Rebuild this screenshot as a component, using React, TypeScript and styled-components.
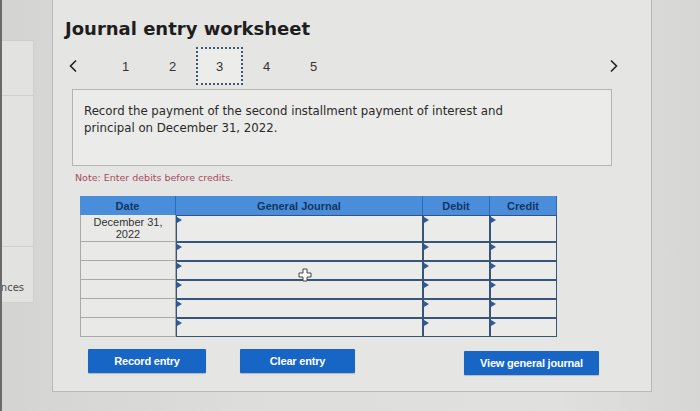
import React from "react";
import styled, { createGlobalStyle } from "styled-components";

const GlobalStyle = createGlobalStyle`
  html, body {
    margin: 0;
    padding: 0;
    width: 700px;
    height: 411px;
    overflow: hidden;
    background: #d9d9d7;
  }
  * {
    box-sizing: border-box;
  }
`;

const Page = styled.div`
  position: relative;
  width: 700px;
  height: 411px;
  background: linear-gradient(to right, #d4d4d2, #dededc 40%, #e0e0de 80%, #d6d6d4);
  border-left: 2px solid #6a6a6a;
  font-family: "DejaVu Sans", Verdana, sans-serif;
  overflow: hidden;
`;

const SideMenu = styled.div`
  display: flex;
  flex-direction: column;
  width: 32px;
  margin-top: 40px;
  height: 263px;
  background: #e2e2e0;
  border: 1px solid #cfcfcd;
  border-left: none;
`;

const SideItem = styled.div<{ $grow?: boolean }>`
  flex: ${(p) => (p.$grow ? 1 : "none")};
  height: ${(p) => (p.$grow ? "auto" : "55px")};
  border-bottom: 1px solid #d0d0ce;
  display: flex;
  align-items: flex-end;
  justify-content: flex-end;
  padding: 0 9px 9px 0;
  font-size: 10px;
  color: #4a4a4a;
  overflow: hidden;
  white-space: nowrap;
  &:last-child {
    border-bottom: none;
  }
`;

const Modal = styled.div`
  position: absolute;
  left: 50px;
  top: -10px;
  width: 600px;
  height: 402px;
  background: #e5e5e3;
  border: 1px solid #b9b9b7;
  display: flex;
  flex-direction: column;
`;

const Title = styled.h1`
  margin: 26px 0 0 12px;
  font-family: "DejaVu Sans", Verdana, sans-serif;
  font-weight: bold;
  font-size: 18px;
  line-height: 24px;
  color: #1e1e1e;
`;

const Pager = styled.div`
  display: flex;
  align-items: center;
  height: 38px;
  margin-top: 6px;
  padding-left: 15px;
  padding-right: 32px;
  font-family: "Liberation Sans", Arial, sans-serif;
`;

const Chevron = styled.div<{ $wide?: boolean }>`
  width: ${(p) => (p.$wide ? "34px" : "auto")};
  display: flex;
  align-items: center;
`;

const PageItem = styled.div<{ $active?: boolean }>`
  width: 47px;
  height: 38px;
  display: flex;
  align-items: center;
  justify-content: center;
  font-size: 13px;
  color: #333;
  border: ${(p) => (p.$active ? "2px dotted #3d5675" : "none")};
  background: ${(p) => (p.$active ? "#ececea" : "transparent")};
`;

const Spacer = styled.div`
  flex: 1;
`;

const Prompt = styled.div`
  margin: 4px 0 0 19px;
  width: 540px;
  height: 77px;
  border: 1px solid #b5b5b3;
  background: #ebebe9;
  padding: 13px 11px;
  font-size: 11.75px;
  line-height: 17px;
  color: #2a2a2a;
`;

const Note = styled.div`
  margin: 6px 0 0 22px;
  font-size: 9.5px;
  color: #a84a5c;
`;

const Journal = styled.div`
  position: relative;
  margin: 13px 0 0 27px;
  width: 477px;
  display: grid;
  grid-template-columns: 96px 247px 67px 67px;
  grid-template-rows: 19px 27px repeat(5, 19px);
  font-family: "Liberation Sans", Arial, sans-serif;
`;

const HeadCell = styled.div`
  background: #4a8edb;
  color: #15355f;
  font-weight: bold;
  font-size: 11px;
  display: flex;
  align-items: center;
  justify-content: center;
  border-right: 1px solid #2f6bb0;
  &:last-of-type {
    border-right: none;
  }
`;

const DateCell = styled.div`
  background: #e9e9e7;
  border: 1px solid #a9a9a7;
  border-top: none;
  font-size: 11px;
  line-height: 12px;
  color: #333;
  text-align: center;
  padding-top: 1px;
`;

const EntryCell = styled.div`
  position: relative;
  background: #ebebe9;
  border: 1.5px solid #37557c;
  border-top-width: 1px;
  &::before {
    content: "";
    position: absolute;
    left: 0;
    top: 1px;
    border-top: 3px solid transparent;
    border-bottom: 3px solid transparent;
    border-left: 5px solid #2c5aa0;
  }
`;

const Cursor = styled.svg`
  position: absolute;
  left: 218px;
  top: 72px;
`;

const Actions = styled.div`
  display: flex;
  align-items: flex-start;
  margin: 12px 0 0 35px;
  padding-right: 52px;
`;

const ActionButton = styled.button<{ $width: number; $gap?: number; $offset?: number }>`
  width: ${(p) => p.$width}px;
  height: 24px;
  margin-left: ${(p) => p.$gap ?? 0}px;
  margin-top: ${(p) => p.$offset ?? 0}px;
  padding: 0;
  border: none;
  border-radius: 1px;
  background: #1765c4;
  color: #fff;
  font-family: "Liberation Sans", Arial, sans-serif;
  font-weight: bold;
  font-size: 11px;
  letter-spacing: -0.2px;
  box-shadow: 0 1px 1px rgba(0, 0, 0, 0.2);
`;

const pages = [1, 2, 3, 4, 5];
const rowCount = 6;

const ChevronIcon = ({ dir }: { dir: "left" | "right" }) => (
  <svg width="10" height="14" viewBox="0 0 10 14">
    <path
      d={dir === "left" ? "M8 1.5 L2.5 7 L8 12.5" : "M2 1.5 L7.5 7 L2 12.5"}
      fill="none"
      stroke="#222"
      strokeWidth="1.6"
    />
  </svg>
);

export default function App() {
  return (
    <Page>
      <GlobalStyle />
      <SideMenu>
        <SideItem>&nbsp;</SideItem>
        <SideItem $grow>&nbsp;</SideItem>
        <SideItem>nces</SideItem>
      </SideMenu>

      <Modal>
        <Title>Journal entry worksheet</Title>

        <Pager>
          <Chevron $wide>
            <ChevronIcon dir="left" />
          </Chevron>
          {pages.map((n) => (
            <PageItem key={n} $active={n === 3}>
              {n}
            </PageItem>
          ))}
          <Spacer />
          <Chevron>
            <ChevronIcon dir="right" />
          </Chevron>
        </Pager>

        <Prompt>
          Record the payment of the second installment payment of interest and
          <br />
          principal on December 31, 2022.
        </Prompt>

        <Note>Note: Enter debits before credits.</Note>

        <Journal>
          <HeadCell>Date</HeadCell>
          <HeadCell>General Journal</HeadCell>
          <HeadCell>Debit</HeadCell>
          <HeadCell>Credit</HeadCell>
          {Array.from({ length: rowCount }).map((_, i) => (
            <React.Fragment key={i}>
              <DateCell>
                {i === 0 ? (
                  <>
                    December 31,
                    <br />
                    2022
                  </>
                ) : null}
              </DateCell>
              <EntryCell />
              <EntryCell />
              <EntryCell />
            </React.Fragment>
          ))}
          <Cursor width="14" height="14" viewBox="0 0 14 14">
            <path
              d="M5 1 H9 V5 H13 V9 H9 V13 H5 V9 H1 V5 H5 Z"
              fill="#fff"
              stroke="#444"
              strokeWidth="1"
            />
          </Cursor>
        </Journal>

        <Actions>
          <ActionButton $width={118}>Record entry</ActionButton>
          <ActionButton $width={115} $gap={34}>
            Clear entry
          </ActionButton>
          <Spacer />
          <ActionButton $width={135} $offset={2}>
            View general journal
          </ActionButton>
        </Actions>
      </Modal>
    </Page>
  );
}
